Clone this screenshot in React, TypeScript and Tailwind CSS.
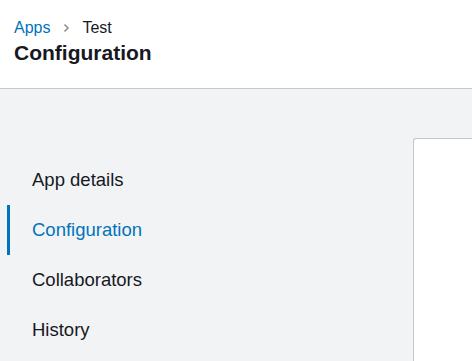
import React from "react"

const navItems = ["App details", "Configuration", "Collaborators", "History"]

export default function App() {
  const active = "Configuration"

  return (
    <div
      className="flex h-[361px] w-[472px] flex-col overflow-hidden bg-[#f2f3f5] text-[#16191f]"
      style={{ fontFamily: '"Liberation Sans", Arial, sans-serif' }}
    >
      <header className="h-[89px] shrink-0 border-b border-[#c6c6cd] bg-white px-[14px] pt-[17px]">
        <nav className="flex h-[22px] items-center text-[16px] leading-[22px]">
          <span className="text-[#0073bb]">Apps</span>
          <svg
            className="mx-[11px] h-[10px] w-[10px] text-[#879596]"
            viewBox="0 0 10 10"
            fill="none"
            stroke="currentColor"
            strokeWidth="1.6"
          >
            <path d="M3.5 1.5 7 5l-3.5 3.5" />
          </svg>
          <span>Test</span>
        </nav>
        <h1 className="mt-[0px] text-[21px] font-bold leading-[28px]">
          Configuration
        </h1>
      </header>

      <div className="flex flex-1">
        <aside className="w-[413px] shrink-0 pt-[66px]">
          <ul>
            {navItems.map((item) => (
              <li
                key={item}
                className="relative flex h-[50px] items-center pl-[32px] text-[18.5px]"
              >
                {item === active && (
                  <span className="absolute left-[7px] top-0 h-[50px] w-[3px] bg-[#0073bb]" />
                )}
                <span className={item === active ? "text-[#0073bb]" : ""}>
                  {item}
                </span>
              </li>
            ))}
          </ul>
        </aside>
        <main className="flex-1 pt-[49px]">
          <div className="h-full rounded-tl-[3px] border-l border-t border-[#c6c6cd] bg-white" />
        </main>
      </div>
    </div>
  )
}
